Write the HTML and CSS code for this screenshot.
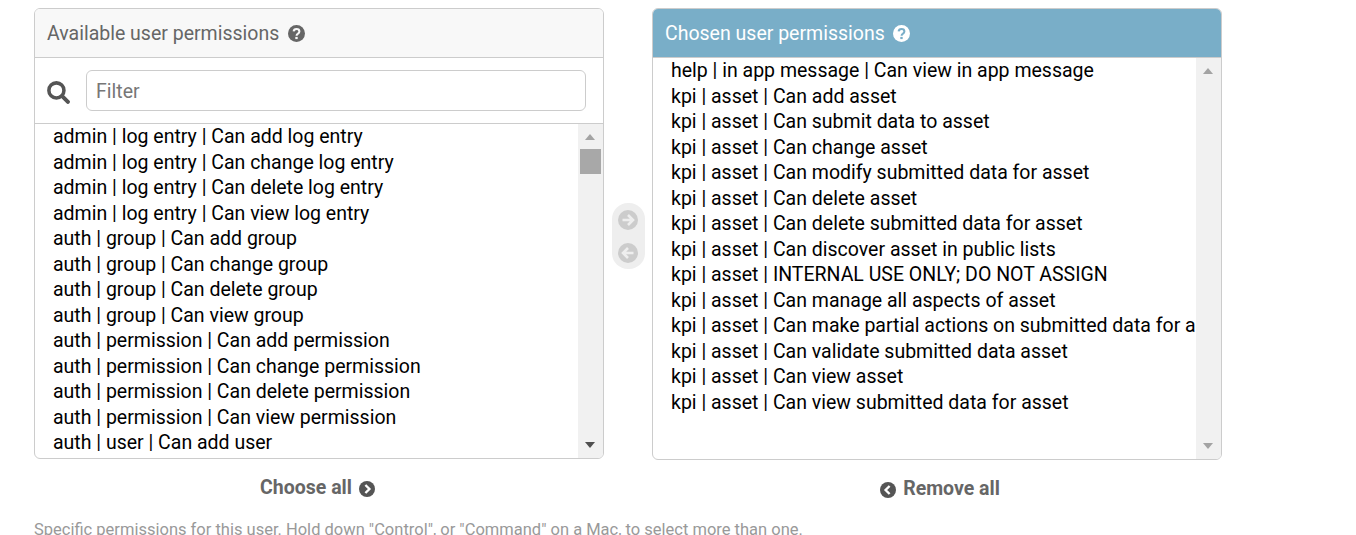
FILE: index.html
```html
<!DOCTYPE html>
<html lang="en">
<head>
  <meta charset="UTF-8">
  <meta name="viewport" content="width=device-width, initial-scale=1.0">
  <title>User permissions</title>
  <link rel="stylesheet" href="styles.css">
</head>
<body>
  <svg class="icon-defs" aria-hidden="true">
    <symbol id="icon-help" viewBox="0 0 20 20">
      <circle cx="10" cy="10" r="10" fill="currentColor"/>
      <path class="cut" d="M6.600 7.600C6.800 5.600 8.200 4.600 10 4.600c2 0 3.400 1.200 3.400 2.900 0 1.500-1 2.200-2 2.900-.9.600-1.300 1-1.300 2.100" fill="none" stroke-width="2.400"/>
      <rect class="cut-fill" x="8.600" y="14" width="2.800" height="2.600"/>
    </symbol>
    <symbol id="icon-arrow-right" viewBox="0 0 20 20">
      <circle cx="10" cy="10" r="10" fill="currentColor"/>
      <path class="cut" d="M4.500 10h10M10 5l5 5-5 5" fill="none" stroke-width="2.600"/>
    </symbol>
    <symbol id="icon-arrow-left" viewBox="0 0 20 20">
      <circle cx="10" cy="10" r="10" fill="currentColor"/>
      <path class="cut" d="M15.500 10h-10M10 5l-5 5 5 5" fill="none" stroke-width="2.600"/>
    </symbol>
    <symbol id="icon-chevron-right" viewBox="0 0 20 20">
      <circle cx="10" cy="10" r="10" fill="currentColor"/>
      <path class="cut" d="M8 5l5 5-5 5" fill="none" stroke-width="3"/>
    </symbol>
    <symbol id="icon-chevron-left" viewBox="0 0 20 20">
      <circle cx="10" cy="10" r="10" fill="currentColor"/>
      <path class="cut" d="M12 5l-5 5 5 5" fill="none" stroke-width="3"/>
    </symbol>
  </svg>

  <div class="selector">
    <div class="column">
      <div class="box">
        <h2 class="box-title">Available user permissions
          <svg class="icon-help"><use href="#icon-help"/></svg>
        </h2>
        <div class="filter">
          <svg class="icon-search" viewBox="0 0 22 22">
            <circle cx="9" cy="9" r="7.200" fill="none" stroke="currentColor" stroke-width="3.400"/>
            <path d="M14.500 14.500l5.500 5.500" fill="none" stroke="currentColor" stroke-width="3.800" stroke-linecap="round"/>
          </svg>
          <input class="filter-input" type="text" placeholder="Filter">
        </div>
        <div class="list-wrap list-short">
          <ul class="list">
            <li>admin | log entry | Can add log entry</li>
            <li>admin | log entry | Can change log entry</li>
            <li>admin | log entry | Can delete log entry</li>
            <li>admin | log entry | Can view log entry</li>
            <li>auth | group | Can add group</li>
            <li>auth | group | Can change group</li>
            <li>auth | group | Can delete group</li>
            <li>auth | group | Can view group</li>
            <li>auth | permission | Can add permission</li>
            <li>auth | permission | Can change permission</li>
            <li>auth | permission | Can delete permission</li>
            <li>auth | permission | Can view permission</li>
            <li>auth | user | Can add user</li>
          </ul>
          <div class="scrollbar">
            <span class="arrow-up"></span>
            <div class="track"><div class="thumb"></div></div>
            <span class="arrow-down"></span>
          </div>
        </div>
      </div>
      <a class="bulk-link bulk-choose" href="#">Choose all
        <svg class="icon-bulk"><use href="#icon-chevron-right"/></svg>
      </a>
    </div>

    <div class="mover">
      <div class="mover-pill">
        <svg class="icon-move"><use href="#icon-arrow-right"/></svg>
        <svg class="icon-move"><use href="#icon-arrow-left"/></svg>
      </div>
    </div>

    <div class="column">
      <div class="box box-chosen">
        <h2 class="box-title">Chosen user permissions
          <svg class="icon-help"><use href="#icon-help"/></svg>
        </h2>
        <div class="list-wrap list-tall">
          <ul class="list">
            <li>help | in app message | Can view in app message</li>
            <li>kpi | asset | Can add asset</li>
            <li>kpi | asset | Can submit data to asset</li>
            <li>kpi | asset | Can change asset</li>
            <li>kpi | asset | Can modify submitted data for asset</li>
            <li>kpi | asset | Can delete asset</li>
            <li>kpi | asset | Can delete submitted data for asset</li>
            <li>kpi | asset | Can discover asset in public lists</li>
            <li>kpi | asset | INTERNAL USE ONLY; DO NOT ASSIGN</li>
            <li>kpi | asset | Can manage all aspects of asset</li>
            <li>kpi | asset | Can make partial actions on submitted data for asset</li>
            <li>kpi | asset | Can validate submitted data asset</li>
            <li>kpi | asset | Can view asset</li>
            <li>kpi | asset | Can view submitted data for asset</li>
          </ul>
          <div class="scrollbar scrollbar-off">
            <span class="arrow-up"></span>
            <div class="track"></div>
            <span class="arrow-down"></span>
          </div>
        </div>
      </div>
      <a class="bulk-link bulk-remove" href="#">
        <svg class="icon-bulk"><use href="#icon-chevron-left"/></svg>
        Remove all
      </a>
    </div>
  </div>

  <p class="help-text">Specific permissions for this user. Hold down "Control", or "Command" on a Mac, to select more than one.</p>
</body>
</html>
```

FILE: styles.css
```css
html, body {
  height: 100%;
  overflow: hidden;
}

body {
  margin: 0;
  padding: 8px 0 0 34px;
  box-sizing: border-box;
  font-family: Roboto, Arial, sans-serif;
  background-color: #fff;
  color: #000;
}

.icon-defs {
  display: none;
}

.selector {
  display: flex;
  align-items: flex-start;
}

.column {
  width: 570px;
  display: flex;
  flex-direction: column;
  align-items: center;
}

.box {
  width: 100%;
  box-sizing: border-box;
  border: 1px solid #ccc;
  border-radius: 6px;
  overflow: hidden;
}

.box-title {
  display: flex;
  align-items: center;
  gap: 9px;
  height: 48px;
  margin: 0;
  padding: 0 12px;
  font-size: 19.5px;
  font-weight: 400;
  color: #666;
  background-color: #f8f8f8;
  border-bottom: 1px solid #ccc;
  box-sizing: content-box;
}

.box-chosen .box-title {
  color: #fff;
  background-color: #79aec8;
}

.icon-help {
  width: 17px;
  height: 17px;
  color: #666;
  --cut: #f8f8f8;
}

.box-chosen .icon-help {
  color: #fff;
  --cut: #79aec8;
  margin-left: -1px;
}

.cut {
  stroke: var(--cut, #fff);
}

.cut-fill {
  fill: var(--cut, #fff);
}

.filter {
  display: flex;
  align-items: center;
  gap: 16px;
  height: 65px;
  padding: 0 17px 0 12px;
  border-bottom: 1px solid #ccc;
}

.icon-search {
  width: 23px;
  height: 23px;
  flex: none;
  margin-top: 3px;
  color: #555;
}

.filter-input {
  flex: 1;
  min-width: 0;
  height: 41px;
  box-sizing: border-box;
  padding: 1px 9px 0;
  font-family: inherit;
  font-size: 19.5px;
  border: 1px solid #ccc;
  border-radius: 6px;
}

.filter-input::placeholder {
  color: #777;
}

.list-wrap {
  display: flex;
}

.list-short {
  height: 334px;
}

.list-tall {
  height: 401px;
}

.list {
  flex: 1;
  min-width: 0;
  margin: 0;
  padding: 0 0 0 18px;
  list-style: none;
  overflow: hidden;
}

.list li {
  height: 25.5px;
  line-height: 25.5px;
  font-size: 19.5px;
  white-space: nowrap;
}

.scrollbar {
  width: 25px;
  flex: none;
  display: flex;
  flex-direction: column;
  align-items: center;
  background-color: #f1f1f1;
}

.track {
  flex: 1;
  width: 100%;
  padding-top: 5px;
}

.thumb {
  width: 21px;
  height: 25px;
  margin: 0 auto;
  background-color: #a8a8a8;
}

.arrow-up,
.arrow-down {
  width: 0;
  height: 0;
  margin-right: 2px;
  border-left: 5px solid transparent;
  border-right: 5px solid transparent;
}

.arrow-up {
  margin-top: 10px;
  margin-bottom: 4px;
  border-bottom: 6px solid #a3a3a3;
}

.arrow-down {
  margin-top: 4px;
  margin-bottom: 10px;
  border-top: 6px solid #505050;
}

.scrollbar-off .arrow-down {
  border-top-color: #a3a3a3;
}

.mover {
  width: 48px;
  flex: none;
  display: flex;
  justify-content: center;
  padding-top: 195px;
}

.mover-pill {
  width: 33px;
  height: 66px;
  display: flex;
  flex-direction: column;
  align-items: center;
  justify-content: center;
  gap: 13px;
  background-color: #eee;
  border-radius: 16px;
}

.icon-move {
  width: 20px;
  height: 20px;
  color: #ccc;
  --cut: #eee;
}

.bulk-link {
  display: flex;
  align-items: center;
  gap: 7px;
  margin-top: 17px;
  font-size: 19.5px;
  font-weight: 700;
  color: #666;
  text-decoration: none;
}

.bulk-choose {
  margin-right: 3px;
}

.bulk-remove {
  margin-left: 6px;
}

.icon-bulk {
  width: 16px;
  height: 16px;
  margin-top: 3px;
  color: #555;
  --cut: #fff;
}

.help-text {
  margin: 20px 0 0;
  font-size: 16.5px;
  color: #999;
  white-space: nowrap;
}
```
